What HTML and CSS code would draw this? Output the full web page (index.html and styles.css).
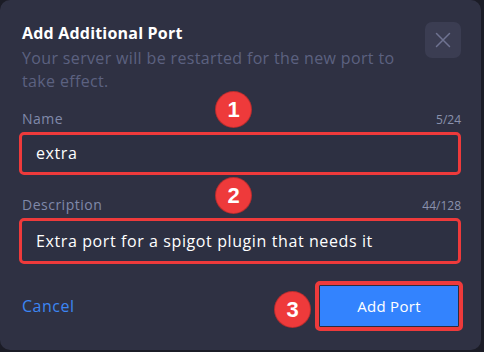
FILE: index.html
```html
<!DOCTYPE html>
<html>
<head>
<meta charset="utf-8">
<link rel="stylesheet" href="styles.css">
</head>
<body>
<div class="dialog">
  <div class="header">
    <div class="heading">
      <div class="title">Add Additional Port</div>
      <div class="subtitle">Your server will be restarted for the new port to take effect.</div>
    </div>
    <button class="close" aria-label="Close">
      <svg width="16" height="16" viewBox="0 0 16 16"><path d="M1.5 1.5L14.5 14.5M14.5 1.5L1.5 14.5" stroke="#6f7391" stroke-width="1.5" stroke-linecap="round"/></svg>
    </button>
  </div>

  <div class="field field-name">
    <div class="label-row"><span class="label">Name</span><span class="count">5/24</span></div>
    <div class="input">extra</div>
    <span class="badge badge-1">1</span>
  </div>

  <div class="field field-desc">
    <div class="label-row"><span class="label">Description</span><span class="count">44/128</span></div>
    <div class="input input-desc">Extra port for a spigot plugin that needs it</div>
    <span class="badge badge-2">2</span>
  </div>

  <div class="actions">
    <span class="cancel">Cancel</span>
    <div class="submit-wrap">
      <span class="badge badge-3">3</span>
      <button class="submit">Add Port</button>
    </div>
  </div>
</div>
</body>
</html>
```

FILE: styles.css
```css
html, body {
  margin: 0;
  padding: 0;
  background: #1b1c26;
}
body {
  width: 484px;
  height: 352px;
  font-family: "Open Sans", "DejaVu Sans", sans-serif;
}
.dialog {
  position: relative;
  box-sizing: border-box;
  width: 481px;
  height: 350px;
  background: #2f3143;
  border-radius: 10px;
  padding: 22px 20px 0 22px;
}
.header {
  display: flex;
  justify-content: space-between;
  align-items: flex-start;
}
.heading {
  width: 384px;
}
.title {
  color: #ffffff;
  font-weight: 700;
  font-size: 16px;
  letter-spacing: 0.2px;
  line-height: 22px;
}
.subtitle {
  color: #5c6180;
  font-size: 16px;
  letter-spacing: 0.35px;
  line-height: 23px;
  margin-top: 3px;
}
.close {
  width: 36px;
  height: 36px;
  border: none;
  border-radius: 7px;
  background: #3b3d52;
  display: flex;
  align-items: center;
  justify-content: center;
  padding: 0;
}
.field {
  position: relative;
}
.field-name {
  margin-top: 17px;
}
.field-desc {
  margin-top: 21px;
}
.label-row {
  display: flex;
  justify-content: space-between;
  align-items: baseline;
  margin-bottom: 4px;
}
.label {
  color: #8089aa;
  font-size: 14px;
  letter-spacing: 0.5px;
  line-height: 18px;
}
.count {
  color: #8a91ad;
  font-size: 12px;
}
.input {
  margin-left: -3px;
  box-sizing: border-box;
  height: 43px;
  border: 3px solid #ee3a3b;
  border-radius: 5px;
  background: #2d3042;
  color: #ffffff;
  font-size: 16px;
  letter-spacing: 0.6px;
  line-height: 37px;
  padding-left: 14px;
}
.input-desc {
  height: 46px;
  line-height: 40px;
}
.badge {
  position: absolute;
  width: 35px;
  height: 35px;
  border-radius: 50%;
  background: #ee3a3b;
  color: #ffffff;
  font-family: "Liberation Sans", Arial, sans-serif;
  font-weight: 700;
  font-size: 22px;
  line-height: 35px;
  text-align: center;
  box-shadow: 0 0 0 1px #b92d2e;
}
.badge-1 {
  left: 194px;
  top: -18px;
}
.badge-2 {
  left: 194px;
  top: -18px;
}
.actions {
  display: flex;
  justify-content: space-between;
  align-items: center;
  margin-top: 17px;
}
.cancel {
  color: #3c86f4;
  font-size: 16px;
  letter-spacing: 0.5px;
}
.submit-wrap {
  position: relative;
  margin-right: -2px;
}
.badge-3 {
  left: -40px;
  top: 11px;
}
.submit {
  width: 148px;
  height: 50px;
  border: 4px solid #ee3a3b;
  border-radius: 5px;
  background: #3383fe;
  color: #ffffff;
  font-family: inherit;
  font-size: 15px;
  letter-spacing: 0.3px;
  box-shadow: inset 0 0 0 1px #2c2e3f;
}
```
